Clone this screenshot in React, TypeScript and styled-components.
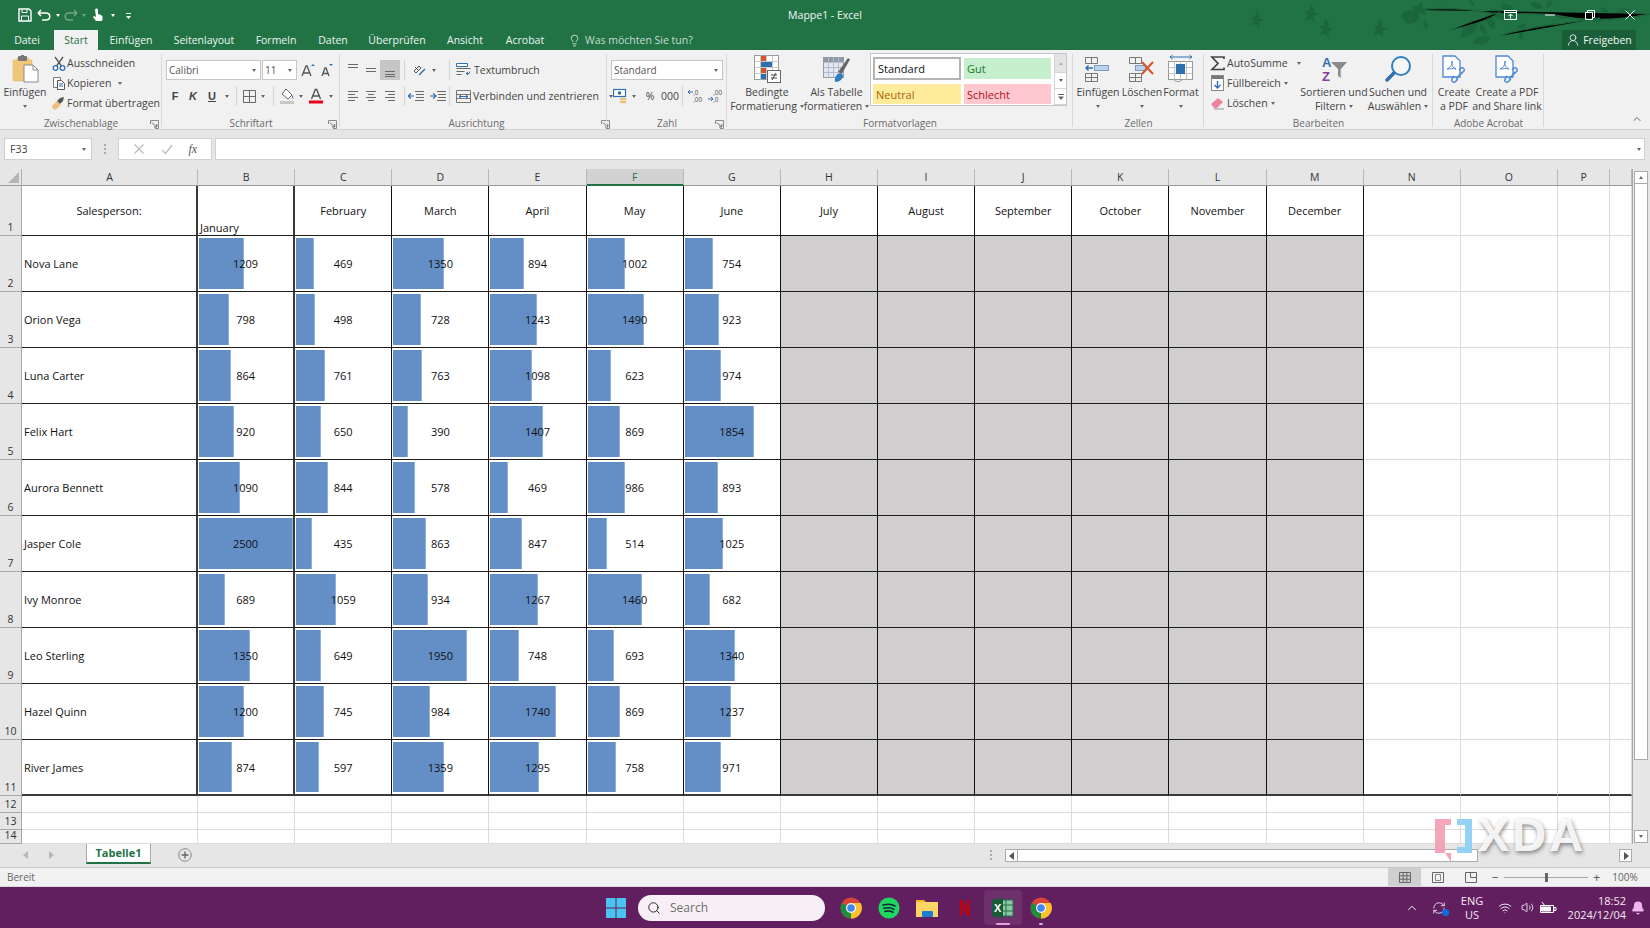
import { ReactNode } from 'react'
import styled, { createGlobalStyle } from 'styled-components'
import { Bell, ChevronUp, Lightbulb, RefreshCw, Search, UserRound, Volume2, Wifi } from 'lucide-react'

const UI_FONT = '"Open Sans", "Noto Sans", sans-serif'

const MONTHS = ['January', 'February', 'March', 'April', 'May', 'June', 'July', 'August', 'September', 'October', 'November', 'December']
const COLS = ['A', 'B', 'C', 'D', 'E', 'F', 'G', 'H', 'I', 'J', 'K', 'L', 'M', 'N', 'O', 'P', '']
const SALES: [string, number[]][] = [
  ['Nova Lane', [1209, 469, 1350, 894, 1002, 754]],
  ['Orion Vega', [798, 498, 728, 1243, 1490, 923]],
  ['Luna Carter', [864, 761, 763, 1098, 623, 974]],
  ['Felix Hart', [920, 650, 390, 1407, 869, 1854]],
  ['Aurora Bennett', [1090, 844, 578, 469, 986, 893]],
  ['Jasper Cole', [2500, 435, 863, 847, 514, 1025]],
  ['Ivy Monroe', [689, 1059, 934, 1267, 1460, 682]],
  ['Leo Sterling', [1350, 649, 1950, 748, 693, 1340]],
  ['Hazel Quinn', [1200, 745, 984, 1740, 869, 1237]],
  ['River James', [874, 597, 1359, 1295, 758, 971]],
]
const MAX_VALUE = 2500
const BAR_SPAN = 94

const GlobalStyle = createGlobalStyle`
  html, body { margin: 0; padding: 0; background: #fff; overflow: hidden; }
  * { box-sizing: border-box; }
  body { font-family: ${UI_FONT}; color: #444; }
`

const Window = styled.div`
  position: relative;
  width: 1650px;
  height: 928px;
  display: flex;
  flex-direction: column;
  overflow: hidden;
`

/* title bar + tabs */
const Header = styled.header`
  position: relative;
  height: 50px;
  background: #217346;
  color: #fff;
`
const Leaves = styled.svg`
  position: absolute;
  left: 0;
  top: 0;
  pointer-events: none;
`
const TitleRow = styled.div`
  position: relative;
  height: 30px;
  display: grid;
  grid-template-columns: 1fr auto 1fr;
  align-items: center;
`
const QuickAccess = styled.div`
  display: flex;
  align-items: center;
  padding-left: 16px;
`
const QuickSlot = styled.span<{ $w: number; $dim?: boolean }>`
  width: ${(p) => p.$w}px;
  display: flex;
  justify-content: center;
  align-items: center;
  opacity: ${(p) => (p.$dim ? 0.35 : 1)};
`
const WindowTitle = styled.div`
  font-size: 10.5px;
  color: #f2f7f4;
  padding-bottom: 1px;
`
const WindowControls = styled.div`
  display: flex;
  justify-content: flex-end;
  padding-right: 0;
`
const WinButton = styled.span`
  width: 40px;
  height: 26px;
  display: flex;
  align-items: center;
  justify-content: center;
`
const TabStrip = styled.nav`
  position: relative;
  height: 20px;
  display: flex;
  align-items: stretch;
`
const Tab = styled.span<{ $w: number; $active?: boolean }>`
  width: ${(p) => p.$w}px;
  display: flex;
  align-items: center;
  justify-content: center;
  font-size: 10.5px;
  color: ${(p) => (p.$active ? '#217346' : '#eef5f1')};
  background: ${(p) => (p.$active ? '#f1f1f1' : 'transparent')};
`
const TellMe = styled.span`
  margin-left: 12px;
  display: flex;
  align-items: center;
  gap: 4px;
  font-size: 10.5px;
  color: #c4dccf;
`
const ShareButton = styled.span`
  margin-left: auto;
  margin-right: 14px;
  width: 74px;
  display: flex;
  align-items: center;
  justify-content: center;
  gap: 3px;
  font-size: 10.5px;
  color: #f4f8f6;
  background: #1a5e39;
`

/* ribbon */
const Ribbon = styled.section`
  height: 80px;
  display: flex;
  background: #f1f1f1;
  border-bottom: 1px solid #d4d4d4;
  font-size: 10.5px;
  color: #444;
`
const Group = styled.div<{ $w: number }>`
  position: relative;
  width: ${(p) => p.$w}px;
  display: grid;
  grid-template-rows: 66px 14px;
  &::after {
    content: '';
    position: absolute;
    right: 0;
    top: 4px;
    bottom: 2px;
    width: 1px;
    background: #d8d8d8;
  }
`
const GroupBody = styled.div<{ $pad?: number }>`
  display: flex;
  padding-top: 3px;
  padding-left: ${(p) => p.$pad ?? 0}px;
`
const GroupLabel = styled.div`
  position: relative;
  display: flex;
  justify-content: center;
  align-items: center;
  font-size: 10px;
  color: #6a6a6a;
`
const Launcher = styled.svg`
  position: absolute;
  right: 3px;
  top: 4px;
`
const LargeButton = styled.div<{ $w: number }>`
  width: ${(p) => p.$w}px;
  display: flex;
  flex-direction: column;
  align-items: center;
  line-height: 14px;
  white-space: nowrap;
`
const LargeIcon = styled.div`
  height: 32px;
  display: flex;
  align-items: center;
  justify-content: center;
`
const LabelLine = styled.div`
  height: 14px;
  display: flex;
  align-items: center;
  gap: 3px;
`
const SmallStack = styled.div<{ $w: number; $ml?: number }>`
  width: ${(p) => p.$w}px;
  margin-left: ${(p) => p.$ml ?? 0}px;
  display: flex;
  flex-direction: column;
`
const SmallRow = styled.div`
  height: 20px;
  display: flex;
  align-items: center;
  white-space: nowrap;
`
const SmallIcon = styled.span<{ $w: number }>`
  width: ${(p) => p.$w}px;
  display: flex;
  justify-content: center;
  align-items: center;
  flex-shrink: 0;
`
const ToolRows = styled.div`
  display: flex;
  flex-direction: column;
  gap: 6px;
  padding-top: 7px;
`
const ToolRow = styled.div`
  height: 20px;
  display: flex;
  align-items: center;
  white-space: nowrap;
`
const Tool = styled.span<{ $w: number; $active?: boolean }>`
  width: ${(p) => p.$w}px;
  height: 20px;
  display: flex;
  align-items: center;
  justify-content: center;
  background: ${(p) => (p.$active ? '#c6c6c6' : 'transparent')};
`
const ToolLetter = styled.span<{ $italic?: boolean; $under?: boolean }>`
  font-family: "Liberation Sans", sans-serif;
  font-weight: 700;
  font-size: 11px;
  color: #444;
  font-style: ${(p) => (p.$italic ? 'italic' : 'normal')};
  text-decoration: ${(p) => (p.$under ? 'underline' : 'none')};
`
const VSep = styled.span<{ $l?: number; $r?: number }>`
  width: 1px;
  height: 20px;
  background: #d4d4d4;
  margin-left: ${(p) => p.$l ?? 0}px;
  margin-right: ${(p) => p.$r ?? 0}px;
  flex-shrink: 0;
`
const Combo = styled.span<{ $w: number; $ml?: number }>`
  width: ${(p) => p.$w}px;
  height: 20px;
  margin-left: ${(p) => p.$ml ?? 0}px;
  background: #fff;
  border: 1px solid #c6c6c6;
  display: flex;
  align-items: center;
  justify-content: space-between;
  padding: 0 4px 0 2px;
  font-size: 10px;
  color: #555;
`
const Caret = styled.span<{ $color?: string; $ml?: number; $block?: boolean }>`
  display: inline-block;
  flex-shrink: 0;
  width: 0;
  height: 0;
  margin-left: ${(p) => p.$ml ?? 0}px;
  border-left: 2.5px solid transparent;
  border-right: 2.5px solid transparent;
  border-top: 3px solid ${(p) => p.$color ?? '#666'};
`
const Gallery = styled.div`
  width: 197px;
  height: 53px;
  display: flex;
  background: #fff;
  border: 1px solid #c6c6c6;
`
const StyleGrid = styled.div`
  flex: 1;
  display: grid;
  grid-template-columns: 88px 87px;
  grid-template-rows: 23px 22px;
  column-gap: 3px;
  row-gap: 3px;
  padding: 3px 0 0 2px;
`
const StyleCell = styled.span<{ $bg: string; $fg: string; $selected?: boolean }>`
  display: flex;
  align-items: center;
  padding-left: 3px;
  font-size: 11px;
  background: ${(p) => p.$bg};
  color: ${(p) => p.$fg};
  border: ${(p) => (p.$selected ? '2px solid #b4b4b4' : '0')};
  margin: ${(p) => (p.$selected ? '0' : '1px 0')};
`
const GalleryScroll = styled.div`
  width: 12px;
  display: flex;
  flex-direction: column;
  border-left: 1px solid #d4d4d4;
`
const GalleryBtn = styled.span<{ $h: number; $bg?: string }>`
  height: ${(p) => p.$h}px;
  display: flex;
  flex-direction: column;
  gap: 1px;
  align-items: center;
  justify-content: center;
  background: ${(p) => p.$bg ?? '#fff'};
  border-bottom: 1px solid #d4d4d4;
`
const CollapseWrap = styled.div`
  flex: 1;
  display: flex;
  justify-content: flex-end;
  align-items: flex-end;
  padding: 0 7px 4px 0;
  color: #666;
`

/* formula bar */
const FormulaBar = styled.div`
  height: 39px;
  display: flex;
  align-items: flex-start;
  padding: 8px 5px 0 4px;
  background: #e6e6e6;
`
const NameBox = styled.div`
  width: 88px;
  height: 22px;
  display: flex;
  align-items: center;
  justify-content: space-between;
  padding: 0 5px;
  background: #fff;
  border: 1px solid #d0d0d0;
  font-size: 10.5px;
  color: #444;
`
const Grip = styled.span`
  width: 26px;
  height: 22px;
  display: flex;
  flex-direction: column;
  align-items: center;
  justify-content: center;
  gap: 2px;
  i {
    width: 2px;
    height: 2px;
    background: #aaa;
  }
`
const FxBox = styled.div`
  width: 94px;
  height: 22px;
  display: flex;
  align-items: center;
  justify-content: space-around;
  padding: 0 6px;
  background: #fff;
  border: 1px solid #d0d0d0;
`
const FxText = styled.span`
  font-family: "Liberation Serif", serif;
  font-style: italic;
  font-size: 12px;
  color: #555;
`
const FormulaInput = styled.div`
  flex: 1;
  height: 22px;
  margin-left: 3px;
  display: flex;
  align-items: center;
  justify-content: flex-end;
  padding-right: 3px;
  background: #fff;
  border: 1px solid #d0d0d0;
`

/* sheet */
const SheetArea = styled.div`
  height: 675px;
  display: flex;
  background: #e6e6e6;
`
const SheetGrid = styled.div`
  width: 1633px;
  display: grid;
  grid-template-columns: 22px 176px repeat(14, 97.15px) 52.3px 1fr;
  grid-template-rows: 17px 50px repeat(10, 56px) 17px 17px 14px;
  background: #fff;
  border-right: 1px solid #a8a8a8;
  border-bottom: 1px solid #a8a8a8;
  color: #111;
  font-size: 11px;
`
const Corner = styled.div`
  background: #e6e6e6;
  border-right: 1px solid #b0b0b0;
  border-bottom: 1px solid #9a9a9a;
  position: relative;
  &::after {
    content: '';
    position: absolute;
    right: 2px;
    bottom: 2px;
    border-style: solid;
    border-width: 0 0 11px 11px;
    border-color: transparent transparent #b5b5b5 transparent;
  }
`
const ColHeader = styled.div<{ $active?: boolean }>`
  display: flex;
  align-items: center;
  justify-content: center;
  font-size: 10.5px;
  color: ${(p) => (p.$active ? '#217346' : '#333')};
  background: ${(p) => (p.$active ? '#d2d2d2' : '#e6e6e6')};
  border-right: 1px solid #b8b8b8;
  border-bottom: ${(p) => (p.$active ? '2px solid #217346' : '1px solid #9a9a9a')};
`
const RowHeader = styled.div`
  display: flex;
  align-items: flex-end;
  justify-content: center;
  font-size: 10.5px;
  line-height: 15px;
  color: #333;
  background: #e6e6e6;
  border-right: 1px solid #a8a8a8;
  border-bottom: 1px solid #a8a8a8;
`
const Cell = styled.div<{ $ruled?: boolean; $heavy?: boolean; $bottom?: boolean; $grey?: boolean; $align?: string; $valign?: string }>`
  position: relative;
  min-width: 0;
  display: flex;
  align-items: ${(p) => p.$valign ?? 'center'};
  justify-content: ${(p) => p.$align ?? 'center'};
  padding: 0 2px;
  background: ${(p) => (p.$grey ? '#d0cece' : '#fff')};
  border-right: ${(p) => (p.$ruled ? (p.$heavy ? '2px solid #3a3a3a' : '1px solid #111') : '1px solid #dcdcdc')};
  border-bottom: ${(p) => (p.$bottom ? '2px solid #3a3a3a' : p.$ruled ? '1px solid #1c1c1c' : '1px solid #dcdcdc')};
`
const DataBar = styled.span`
  position: absolute;
  left: 1px;
  top: 2px;
  bottom: 2px;
  background: #638ec6;
  border-right: 1px solid #8fb0da;
`
const CellValue = styled.span`
  position: relative;
`
const VScroll = styled.div`
  flex: 1;
  display: flex;
  flex-direction: column;
  padding: 2px 2px 1px 1px;
`
const ScrollBtn = styled.span`
  height: 13px;
  display: flex;
  align-items: center;
  justify-content: center;
  background: #fff;
  border: 1px solid #ababab;
`
const ScrollThumb = styled.span`
  flex: 1;
  background: #fff;
  border: 1px solid #ababab;
  border-top: 0;
  margin-bottom: 70px;
`
const ScrollTrack = styled.span`
  flex: 1;
  background: #e6e6e6;
`

/* sheet tabs */
const SheetTabs = styled.div`
  height: 24px;
  display: flex;
  align-items: flex-start;
  background: #e6e6e6;
  border-bottom: 1px solid #c8c8c8;
`
const NavArrows = styled.div`
  width: 86px;
  height: 22px;
  display: flex;
  align-items: center;
  gap: 19px;
  padding-left: 23px;
`
const SheetTab = styled.div`
  width: 65px;
  height: 21px;
  display: flex;
  align-items: center;
  justify-content: center;
  background: #fff;
  border-left: 1px solid #a8a8a8;
  border-right: 1px solid #a8a8a8;
  border-bottom: 2px solid #217346;
  margin-top: -1px;
  font-size: 11px;
  font-weight: 700;
  color: #217346;
`
const AddSheet = styled.span`
  margin-left: 27px;
  height: 22px;
  display: flex;
  align-items: center;
`
const HScrollGrip = styled(Grip)`
  margin-left: auto;
  width: 16px;
  margin-right: 6px;
`
const HScroll = styled.div`
  width: 627px;
  height: 13px;
  margin: 5px 18px 0 0;
  display: flex;
`
const HScrollBtn = styled.span`
  width: 13px;
  display: flex;
  align-items: center;
  justify-content: center;
  background: #fff;
  border: 1px solid #ababab;
  flex-shrink: 0;
`
const HThumb = styled.span`
  width: 460px;
  background: #fff;
  border: 1px solid #ababab;
  border-left: 0;
`

/* status bar */
const StatusBar = styled.footer`
  height: 19px;
  display: flex;
  align-items: stretch;
  background: #f1f1f1;
  border-bottom: 1px solid #d8d8d8;
  font-size: 10px;
  color: #666;
`
const StatusText = styled.span`
  padding-left: 7px;
  display: flex;
  align-items: center;
`
const ViewButtons = styled.div`
  margin-left: auto;
  display: flex;
`
const ViewButton = styled.span<{ $active?: boolean }>`
  width: 33px;
  display: flex;
  align-items: center;
  justify-content: center;
  background: ${(p) => (p.$active ? '#cfcfcf' : 'transparent')};
`
const ZoomBox = styled.div`
  width: 113px;
  display: flex;
  align-items: center;
  gap: 5px;
  padding-left: 5px;
  font-size: 12px;
  color: #555;
`
const ZoomTrack = styled.span`
  position: relative;
  width: 86px;
  height: 1px;
  background: #a8a8a8;
  &::after {
    content: '';
    position: absolute;
    left: 41px;
    top: -4px;
    width: 3px;
    height: 9px;
    background: #666;
  }
`
const ZoomPercent = styled.span`
  width: 50px;
  display: flex;
  align-items: center;
  justify-content: center;
  font-size: 10px;
`

/* taskbar */
const Taskbar = styled.div`
  flex: 1;
  display: flex;
  align-items: center;
  background: #621f5f;
  padding-left: 606px;
  color: #fff;
`
const SearchBox = styled.div`
  width: 187px;
  height: 26px;
  margin-left: 12px;
  margin-right: 7px;
  display: flex;
  align-items: center;
  gap: 9px;
  padding-left: 9px;
  border-radius: 13px;
  background: #f6eff5;
  color: #222;
  span {
    font-size: 12px;
    color: #6d6d6d;
  }
`
const TaskIcon = styled.span<{ $active?: boolean; $w?: number }>`
  position: relative;
  width: ${(p) => p.$w ?? 38}px;
  height: 35px;
  display: flex;
  align-items: center;
  justify-content: center;
  border-radius: 4px;
  background: ${(p) => (p.$active ? 'rgba(255,255,255,0.08)' : 'transparent')};
`
const RunDot = styled.i<{ $wide?: boolean }>`
  position: absolute;
  bottom: 0;
  left: 50%;
  width: ${(p) => (p.$wide ? 14 : 4)}px;
  height: 2.5px;
  transform: translateX(-50%);
  border-radius: 2px;
  background: ${(p) => (p.$wide ? '#e9a0dc' : '#c9b8c9')};
`
const Tray = styled.div`
  margin-left: auto;
  display: flex;
  align-items: center;
  height: 100%;
`
const TraySlot = styled.span<{ $w: number }>`
  position: relative;
  width: ${(p) => p.$w}px;
  display: flex;
  align-items: center;
  justify-content: center;
`
const TrayText = styled.div<{ $w: number; $align: string }>`
  width: ${(p) => p.$w}px;
  font-size: 11px;
  line-height: 14px;
  text-align: ${(p) => p.$align};
  color: #f4eaf3;
`
const SyncDot = styled.i`
  position: absolute;
  right: 5px;
  bottom: -1px;
  width: 7px;
  height: 7px;
  border-radius: 50%;
  background: #0a6de0;
`

/* watermark */
const Watermark = styled.div`
  position: absolute;
  left: 1435px;
  top: 812px;
  display: flex;
  align-items: flex-start;
  gap: 6px;
  pointer-events: none;
`
const WatermarkText = styled.span`
  font-family: "Liberation Sans", sans-serif;
  font-weight: 700;
  font-size: 47px;
  line-height: 46px;
  letter-spacing: 3px;
  color: rgba(255, 255, 255, 0.88);
  text-shadow: 1px 2px 4px rgba(0, 0, 0, 0.45);
`

type IconProps = { children: ReactNode; w?: number; h?: number; vb?: string }
const Ico = ({ children, w = 16, h = 16, vb }: IconProps) => (
  <svg width={w} height={h} viewBox={vb ?? `0 0 ${w} ${h}`} fill="none">
    {children}
  </svg>
)

const Lines = ({ rows, color = '#6a6a6a' }: { rows: [number, number, number][]; color?: string }) => (
  <Ico>
    {rows.map(([a, b, y], i) => (
      <path key={i} d={`M${a} ${y}.5H${b}`} stroke={color} />
    ))}
  </Ico>
)

const DialogLauncher = () => (
  <Launcher width="9" height="9" viewBox="0 0 9 9" fill="none">
    <path d="M.5 4V.5H8.5V8.5H5" stroke="#8a8a8a" />
    <path d="M2 2.5L6.5 7M6.8 4V7H4" stroke="#666" />
  </Launcher>
)

const leaf = (x: number, y: number, rot: number, len: number) => (
  <path
    key={`${x}-${y}`}
    d={`M0 0C${len * 0.3} ${-len * 0.3} ${len * 0.75} ${-len * 0.28} ${len} 0C${len * 0.75} ${len * 0.28} ${len * 0.3} ${len * 0.3} 0 0Z`}
    transform={`translate(${x} ${y}) rotate(${rot})`}
  />
)
const bird = (x: number, y: number, s: number) => (
  <path
    key={`b${x}`}
    d="M0 -9C3 -8 4 -4 3 -1L9 -1L3 2L4 8L0 4L-5 6L-2 1L-5 -3L-1 -3Z"
    transform={`translate(${x} ${y}) scale(${s})`}
  />
)

const LEAVES: [number, number, number, number][] = [
  [1420, 13, 170, 20], [1420, 17, 160, 16], [1402, 13, 10, 17], [1412, 6, 30, 16], [1416, 22, 200, 16], [1418, 12, -70, 10],
  [1425, 20, 80, 10], [1440, 24, 20, 1], [1478, 20, 135, 24], [1480, 24, 60, 13], [1482, 12, 170, 2], [1490, 10, 25, 20],
  [1488, 14, 70, 16], [1470, 0, 60, 8], [1500, 6, 10, 14], [1490, 38, 165, 18], [1520, 30, 80, 10], [1527, 25, 170, 10],
  [1530, 3, 20, 14], [1546, 8, -50, 10], [1555, 14, 15, 14], [1590, 18, 10, 14], [1615, 14, -20, 14], [1600, 8, 30, 10],
]

const LeafArt = () => (
  <Leaves width="1650" height="50" viewBox="0 0 1650 50">
    <g fill="#1b663c">
      {[bird(1256, 20, 1), bird(1310, 14, 1.1), bird(1325, 29, 1.1), bird(1379, 29, 1.1)]}
      {LEAVES.map(([x, y, r, l]) => leaf(x, y, r, l))}
    </g>
    <path
      d="M1418 10C1440 7 1470 9 1490 13C1510 15 1540 12 1560 16C1580 20 1610 22 1650 14M1450 30C1470 26 1490 20 1500 12M1500 36C1520 28 1560 24 1600 18"
      stroke="#1b663c"
      strokeWidth="1.5"
    />
  </Leaves>
)

const PasteIcon = () => (
  <Ico w={28} h={28}>
    <path d="M2 5h4V3h12v2h3v21H2z" fill="#f0c778" stroke="#e2b765" strokeWidth=".5" />
    <rect x="7" y="1" width="9" height="5" rx="1" fill="#777" />
    <rect x="10" y="0" width="3" height="3" fill="#777" />
    <path d="M13 10h9l5 5v12H13z" fill="#fff" stroke="#8a8a8a" />
    <path d="M22 10v5h5" stroke="#8a8a8a" />
  </Ico>
)
const ScissorsIcon = () => (
  <Ico w={14} h={15}>
    <path d="M3 1l6.5 9M11 1L4.5 10" stroke="#555" strokeWidth="1.3" />
    <circle cx="3.5" cy="12" r="2.3" stroke="#2f6fb0" strokeWidth="1.3" />
    <circle cx="10.5" cy="12" r="2.3" stroke="#2f6fb0" strokeWidth="1.3" />
  </Ico>
)
const CopyIcon = () => (
  <Ico w={14} h={14}>
    <path d="M1.5 1.5h7v10h-7z" fill="#fff" stroke="#777" />
    <path d="M5.5 4.5h4l3 3v6h-7z" fill="#fff" stroke="#555" />
    <path d="M7 8h4M7 10h4" stroke="#2f6fb0" />
  </Ico>
)
const PainterIcon = () => (
  <Ico w={15} h={14}>
    <path d="M1 10l5-5 4 4-5 4.5c-2 .5-4-1-4-3.5z" fill="#eec07a" />
    <path d="M6 5l3-3 4-1-1 4-3 3z" fill="#555" />
  </Ico>
)
const BordersIcon = () => (
  <Ico w={13} h={13}>
    <path d="M.5.5h12v12H.5zM6.5.5v12M.5 6.5h12" stroke="#6a6a6a" />
  </Ico>
)
const FillIcon = () => (
  <Ico w={15} h={16}>
    <path d="M6 1l6 6-4 4-6-5z" fill="#fff" stroke="#666" />
    <path d="M12 7c1 1 2 3 1 4-1-1-1-3-1-4z" fill="#2f6fb0" />
    <rect x="0" y="13" width="14" height="3" fill="#c8c8c8" />
  </Ico>
)
const FontColorIcon = () => (
  <Ico w={14} h={16}>
    <path d="M2.5 11L6.3 1.5h1.4L11.5 11M4 8h6" stroke="#555" strokeWidth="1.4" />
    <rect x="0" y="12.5" width="14" height="3" fill="#e8001c" />
  </Ico>
)
const SizeA = ({ up }: { up?: boolean }) => (
  <Ico w={15} h={15}>
    <path d={up ? 'M2 13L6 3h1l4 10M3.5 10h6' : 'M3 13L6 5h1l3 8M4.2 10.5h4.6'} stroke="#555" strokeWidth="1.3" />
    <path d={up ? 'M11 3l2-2 2 2z' : 'M10 1h4l-2 2z'} fill="#2f6fb0" />
  </Ico>
)
const OrientIcon = () => (
  <Ico w={14} h={14}>
    <path d="M2 8l5-5 2 2-5 5zM3 4l3 3" stroke="#555" />
    <path d="M7 12l6-6" stroke="#2f6fb0" strokeWidth="1.5" />
  </Ico>
)
const WrapIcon = () => (
  <Ico w={15} h={15}>
    <path d="M.5.5h11v3H.5z" fill="#fff" stroke="#2f6fb0" />
    <path d="M.5 5.5h14M.5 8.5h8M.5 11.5h5" stroke="#666" />
    <path d="M10 10.5h3l1-2M12 9l-2 1.5 2 1.5" stroke="#2f6fb0" />
  </Ico>
)
const MergeIcon = () => (
  <Ico w={15} h={15}>
    <path d="M.5 1.5h14v12H.5zM.5 5.5h14M.5 9.5h14" stroke="#777" />
    <path d="M3 7.5h9M3 7.5l2-1.5M3 7.5l2 1.5M12 7.5l-2-1.5M12 7.5l-2 1.5" stroke="#2f6fb0" />
  </Ico>
)
const IndentIcon = ({ flip }: { flip?: boolean }) => (
  <Ico w={16} h={12}>
    <path d={flip ? 'M0 6h6M3 3.5L6 6 3 8.5' : 'M6 6H0M3 3.5L0 6l3 2.5'} stroke="#2f6fb0" strokeWidth="1.2" />
    <path d="M7 1.5h9M8 4.5h8M8 7.5h8M7 10.5h9" stroke="#6a6a6a" />
  </Ico>
)
const CurrencyIcon = () => (
  <Ico w={15} h={16}>
    <rect x=".5" y="1.5" width="12" height="7" fill="#fff" stroke="#2f6fb0" strokeWidth="1.2" />
    <circle cx="6.5" cy="5" r="1.8" fill="#2f6fb0" />
    <ellipse cx="10" cy="11" rx="3.5" ry="1.3" fill="#eec07a" />
    <ellipse cx="10" cy="14" rx="3.5" ry="1.3" fill="#eec07a" />
  </Ico>
)
const DecimalText = styled.text`
  font-family: "Liberation Sans", sans-serif;
  font-size: 6.5px;
  fill: #555;
`
const DecimalIcon = ({ more }: { more?: boolean }) => (
  <Ico w={16} h={14}>
    <DecimalText x="5" y="6">{more ? ',0' : ',00'}</DecimalText>
    <DecimalText x="5" y="13">{more ? ',00' : ',0'}</DecimalText>
    <path d={more ? 'M5 3H0M2 1L0 3l2 2' : 'M0 10h5M3 8l2 2-2 2'} stroke="#2f6fb0" />
  </Ico>
)
const CondFormatIcon = () => (
  <Ico w={27} h={28}>
    <rect x=".5" y=".5" width="24" height="24" fill="#fff" stroke="#999" />
    <path d="M6.5.5v24M12.5.5v24M18.5.5v24M.5 6.5h24M.5 12.5h24M.5 18.5h24" stroke="#c9c9c9" />
    <rect x="7" y="1" width="5" height="5" fill="#d0552f" />
    <rect x="7" y="7" width="11" height="5" fill="#2f6fb0" />
    <rect x="7" y="13" width="5" height="5" fill="#d0552f" />
    <rect x="7" y="19" width="5" height="5" fill="#2f6fb0" />
    <rect x="13.5" y="15.5" width="13" height="12" fill="#fff" stroke="#666" />
    <path d="M17 20h6M17 23h6M22 18l-4 7" stroke="#444" />
  </Ico>
)
const TableFormatIcon = () => (
  <Ico w={27} h={28}>
    <rect x=".5" y="2.5" width="20" height="20" fill="#dfe8f3" stroke="#999" />
    <rect x=".5" y="2.5" width="20" height="5" fill="#8f9aa8" />
    <path d="M5.5 2.5v20M10.5 2.5v20M15.5 2.5v20M.5 7.5h20M.5 12.5h20M.5 17.5h20" stroke="#b5bcc6" />
    <path d="M15 17L25 3l2 1.5-8 14z" fill="#666" />
    <path d="M12 27c-1-5 2-9 6-9l2 2c0 4-3 7-8 7z" fill="#2f7fc0" />
  </Ico>
)
const InsertCellIcon = () => (
  <Ico w={26} h={28}>
    <path d="M.5 2.5h12v6H.5zM6.5 2.5v6M.5 18.5h12v8H.5zM.5 22.5h12M6.5 18.5v8" stroke="#777" />
    <rect x="9.5" y="10.5" width="14" height="5" fill="#bcd2e8" stroke="#7a9cc0" />
    <path d="M8 13H1M3.5 10.5L1 13l2.5 2.5" stroke="#2f6fb0" strokeWidth="1.5" />
  </Ico>
)
const DeleteCellIcon = () => (
  <Ico w={26} h={28}>
    <path d="M.5 2.5h12v6H.5zM6.5 2.5v6M.5 18.5h12v8H.5zM.5 22.5h12M6.5 18.5v8" stroke="#777" />
    <rect x="6.5" y="10.5" width="10" height="5" fill="#bcd2e8" stroke="#7a9cc0" />
    <path d="M13 7l11 12M24 7L13 19" stroke="#d8502b" strokeWidth="2" />
  </Ico>
)
const FormatCellIcon = () => (
  <Ico w={26} h={30}>
    <path d="M2 3h22M2 3l2.5-2M2 3l2.5 2M24 3l-2.5-2M24 3l-2.5 2" stroke="#2f6fb0" />
    <rect x=".5" y="7.5" width="24" height="18" fill="#fff" stroke="#999" />
    <path d="M6.5 7.5v18M12.5 7.5v18M18.5 7.5v18M.5 13.5h24M.5 19.5h24" stroke="#c4c4c4" />
    <rect x="8" y="10" width="9" height="10" fill="#2f6fb0" />
    <path d="M6 26c2 2 6 2 8 0" stroke="#999" />
  </Ico>
)
const SigmaIcon = () => (
  <Ico w={16} h={15}>
    <path d="M14 3V1H2l6 6.5L2 13.5h12v-2" stroke="#444" strokeWidth="1.7" />
  </Ico>
)
const FillDownIcon = () => (
  <Ico w={14} h={16}>
    <rect x=".5" y=".5" width="12" height="15" fill="#fff" stroke="#888" />
    <rect x="1" y="1" width="11" height="3" fill="#777" />
    <path d="M6.5 6v7M3.5 10l3 3 3-3" stroke="#2f6fb0" strokeWidth="1.4" />
  </Ico>
)
const EraserIcon = () => (
  <Ico w={15} h={14}>
    <path d="M1 8l7-6 5 4-6 6H4z" fill="#e8859a" />
    <path d="M4 13h10" stroke="#999" />
  </Ico>
)
const SortLetter = styled.text<{ $color: string }>`
  font-family: "Liberation Sans", sans-serif;
  font-size: 13px;
  font-weight: 700;
  fill: ${(p) => p.$color};
`
const SortIcon = () => (
  <Ico w={28} h={28}>
    <SortLetter $color="#2f6fb0" x="2" y="12">A</SortLetter>
    <SortLetter $color="#7b3fa0" x="2" y="26">Z</SortLetter>
    <path d="M11 7h16l-6 7v9l-3-2v-7z" fill="#8a8a8a" />
    <path d="M21 14v8" stroke="#ddd" />
  </Ico>
)
const MagnifierIcon = () => (
  <Ico w={28} h={28}>
    <circle cx="17" cy="11" r="9" stroke="#2f7fc0" strokeWidth="2" fill="#fff" fillOpacity=".4" />
    <path d="M10 18l-7 7" stroke="#2f6fb0" strokeWidth="3.5" strokeLinecap="round" />
  </Ico>
)
const PdfLinkIcon = () => (
  <Ico w={24} h={28}>
    <path d="M1 1h12l5 5v16H1z" fill="#fff" stroke="#4f86d8" strokeWidth="1.3" />
    <path d="M5 14c3-1 6-5 5-8-1 3 1 7 4 8-3-1-6 0-9 0z" stroke="#4f86d8" />
    <path d="M14 24l6-7M17 15l2-2c2-1 4 1 3 3l-3 3M12 21l-2 3c-1 2 1 4 3 3l3-3" stroke="#4f86d8" strokeWidth="1.4" />
  </Ico>
)
const FooterArrow = ({ left, color = '#b8b8b8' }: { left?: boolean; color?: string }) => (
  <Ico w={6} h={8}>
    <path d={left ? 'M5 0v8L0 4z' : 'M1 0v8l5-4z'} fill={color} />
  </Ico>
)
const ChromeIcon = () => (
  <Ico w={22} h={22}>
    <circle cx="11" cy="11" r="10.5" fill="#db4437" />
    <path d="M11 11L20.1 16.3A10.5 10.5 0 0 1 11 21.5 10.5 10.5 0 0 1 1.9 5.8Z" fill="#1e8e3e" />
    <path d="M11 6h9.6A10.5 10.5 0 0 1 11 21.5L11 11z" fill="#fbc02d" />
    <circle cx="11" cy="11" r="5" fill="#fff" />
    <circle cx="11" cy="11" r="3.8" fill="#4285f4" />
  </Ico>
)
const SpotifyIcon = () => (
  <Ico w={22} h={22}>
    <circle cx="11" cy="11" r="10.5" fill="#1ed760" />
    <path d="M5 8c4-1 9-1 12 1M6 11.3c3.5-.8 7.5-.6 10 1M7 14.4c3-.6 6-.4 8 .8" stroke="#123" strokeWidth="1.6" strokeLinecap="round" />
  </Ico>
)
const FolderIcon = () => (
  <Ico w={22} h={20}>
    <path d="M0 2h8l2 2h12v15H0z" fill="#f2b824" />
    <rect x="0" y="4" width="22" height="15" fill="#fbd667" />
    <rect x="6" y="13" width="11" height="6" rx="1" fill="#1a7fd1" />
  </Ico>
)
const NetflixIcon = () => (
  <Ico w={10} h={16}>
    <path d="M0 0h3l7 16H7zM0 0h3v15l-3 1zM7 0h3v16l-3-1z" fill="#b3071a" />
  </Ico>
)
const ExcelMark = styled.text`
  font-family: "Liberation Sans", sans-serif;
  font-weight: 700;
  font-size: 11px;
  fill: #fff;
`
const ExcelIcon = () => (
  <Ico w={22} h={20}>
    <rect x="7" y="2" width="14" height="16" fill="#8cc9a1" stroke="#21734a" />
    <path d="M14 2v16M7 7h14M7 13h14" stroke="#21734a" />
    <path d="M0 2l11-2v20L0 18z" fill="#185c37" />
    <ExcelMark x="2" y="14">X</ExcelMark>
  </Ico>
)
const BatteryIcon = () => (
  <Ico w={18} h={14}>
    <path d="M1.5 4.5h13v7h-13zM15 6.5h2v3h-2z" stroke="#fff" />
    <path d="M3 1l3 4M2.5 6h9v4h-9z" fill="#fff" stroke="#fff" />
  </Ico>
)

const ALIGN_ROWS: Record<string, [number, number, number][]> = {
  top: [[3, 13, 2], [3, 13, 5]],
  middle: [[3, 13, 6], [3, 13, 9]],
  bottom: [[3, 13, 9], [3, 13, 12], [3, 13, 14]],
  left: [[3, 13, 3], [3, 10, 6], [3, 13, 9], [3, 10, 12]],
  center: [[3, 13, 3], [5, 11, 6], [3, 13, 9], [5, 11, 12]],
  right: [[3, 13, 3], [6, 13, 6], [3, 13, 9], [6, 13, 12]],
}

const Large = ({ w, icon, lines, caretOwn }: { w: number; icon: ReactNode; lines: string[]; caretOwn?: boolean }) => (
  <LargeButton $w={w}>
    <LargeIcon>{icon}</LargeIcon>
    {lines.map((l, i) => (
      <LabelLine key={l}>
        {l}
        {caretOwn && i === lines.length - 1 && <Caret />}
      </LabelLine>
    ))}
    {!caretOwn && (
      <LabelLine>
        <Caret />
      </LabelLine>
    )}
  </LargeButton>
)

const Sheet = () => {
  const cells: ReactNode[] = [<Corner key="corner" />]
  COLS.forEach((c) => {
    cells.push(
      <ColHeader key={`h${c}`} $active={c === 'F'}>
        {c}
      </ColHeader>,
    )
  })

  const plain = (row: number, from: number, bottom?: boolean) =>
    COLS.slice(from).map((c) => <Cell key={`${c}${row}`} $bottom={bottom} />)

  cells.push(<RowHeader key="r1">1</RowHeader>)
  cells.push(
    <Cell key="A1" $ruled $heavy>
      Salesperson:
    </Cell>,
  )
  MONTHS.forEach((m, i) => {
    cells.push(
      <Cell key={m} $ruled $heavy={i === 0} $align={i === 0 ? 'flex-start' : 'center'} $valign={i === 0 ? 'flex-end' : 'center'}>
        {m}
      </Cell>,
    )
  })
  cells.push(...plain(1, 13))

  SALES.forEach(([name, values], r) => {
    const row = r + 2
    const last = r === SALES.length - 1
    cells.push(<RowHeader key={`r${row}`}>{row}</RowHeader>)
    cells.push(
      <Cell key={`A${row}`} $ruled $heavy $bottom={last} $align="flex-start">
        {name}
      </Cell>,
    )
    values.forEach((v, i) => {
      cells.push(
        <Cell key={`${i}-${row}`} $ruled $heavy={i === 0} $bottom={last}>
          <DataBar style={{ width: (v / MAX_VALUE) * BAR_SPAN }} />
          <CellValue>{v}</CellValue>
        </Cell>,
      )
    })
    for (let i = 0; i < 6; i += 1) {
      cells.push(<Cell key={`g${i}-${row}`} $ruled $grey $bottom={last} />)
    }
    cells.push(...plain(row, 13, last))
  })

  ;[12, 13, 14].forEach((row) => {
    cells.push(<RowHeader key={`r${row}`}>{row}</RowHeader>)
    cells.push(...plain(row, 0))
  })

  return <SheetGrid>{cells}</SheetGrid>
}

export default function App() {
  return (
    <Window>
      <GlobalStyle />
      <Header>
        <LeafArt />
        <TitleRow>
          <QuickAccess>
            <QuickSlot $w={18}>
              <Ico w={14} h={14}>
                <path d="M1 1h10l2 2v10H1z" stroke="#fff" strokeWidth="1.4" />
                <path d="M4 1.5v3h5v-3M3.5 13V8h7v5" stroke="#fff" />
              </Ico>
            </QuickSlot>
            <QuickSlot $w={20}>
              <Ico w={14} h={12}>
                <path d="M1 4h8c5 0 5 7 0 7H5M1 4l3-3M1 4l3 3" stroke="#fff" strokeWidth="1.5" />
              </Ico>
            </QuickSlot>
            <QuickSlot $w={8}>
              <Caret $color="#fff" />
            </QuickSlot>
            <QuickSlot $w={18} $dim>
              <Ico w={14} h={12}>
                <path d="M13 4H5C0 4 0 11 5 11h4M13 4l-3-3M13 4l-3 3" stroke="#fff" strokeWidth="1.5" />
              </Ico>
            </QuickSlot>
            <QuickSlot $w={8} $dim>
              <Caret $color="#fff" />
            </QuickSlot>
            <QuickSlot $w={20}>
              <Ico w={12} h={15}>
                <path d="M3 1.5c1-1.5 3-1 3 .5v4l3 1c2 1 2 3 1 6H4L1 9l1-1 2 1z" fill="#fff" />
              </Ico>
            </QuickSlot>
            <QuickSlot $w={10}>
              <Caret $color="#fff" />
            </QuickSlot>
            <QuickSlot $w={20}>
              <Ico w={7} h={7}>
                <path d="M1 1.5h5" stroke="#fff" />
                <path d="M1 4h5L3.5 7z" fill="#fff" />
              </Ico>
            </QuickSlot>
          </QuickAccess>
          <WindowTitle>Mappe1 - Excel</WindowTitle>
          <WindowControls>
            <WinButton>
              <Ico w={13} h={10}>
                <path d="M.5.5h12v9H.5zM.5 2.5h12" stroke="#fff" />
                <path d="M6.5 8.5V4M4.5 6l2-2 2 2" stroke="#fff" />
              </Ico>
            </WinButton>
            <WinButton>
              <Ico w={10} h={2}>
                <path d="M0 1h10" stroke="#fff" />
              </Ico>
            </WinButton>
            <WinButton>
              <Ico w={10} h={10}>
                <path d="M.5 2.5h7v7h-7zM2.5 2.5v-2h7v7h-2" stroke="#fff" />
              </Ico>
            </WinButton>
            <WinButton>
              <Ico w={10} h={10}>
                <path d="M.5.5l9 9M9.5.5l-9 9" stroke="#fff" />
              </Ico>
            </WinButton>
          </WindowControls>
        </TitleRow>
        <TabStrip>
          <Tab $w={54}>Datei</Tab>
          <Tab $w={44} $active>
            Start
          </Tab>
          <Tab $w={66}>Einfügen</Tab>
          <Tab $w={80}>Seitenlayout</Tab>
          <Tab $w={64}>Formeln</Tab>
          <Tab $w={50}>Daten</Tab>
          <Tab $w={78}>Überprüfen</Tab>
          <Tab $w={58}>Ansicht</Tab>
          <Tab $w={62}>Acrobat</Tab>
          <TellMe>
            <Lightbulb size={13} strokeWidth={1.3} color="#fff" />
            Was möchten Sie tun?
          </TellMe>
          <ShareButton>
            <UserRound size={14} strokeWidth={1.4} />
            Freigeben
          </ShareButton>
        </TabStrip>
      </Header>

      <Ribbon>
        <Group $w={162}>
          <GroupBody>
            <LargeButton $w={50}>
              <LargeIcon>
                <PasteIcon />
              </LargeIcon>
              <LabelLine>Einfügen</LabelLine>
              <LabelLine>
                <Caret />
              </LabelLine>
            </LargeButton>
            <SmallStack $w={108}>
              <SmallRow>
                <SmallIcon $w={17}>
                  <ScissorsIcon />
                </SmallIcon>
                Ausschneiden
              </SmallRow>
              <SmallRow>
                <SmallIcon $w={17}>
                  <CopyIcon />
                </SmallIcon>
                Kopieren
                <Caret $ml={7} />
              </SmallRow>
              <SmallRow>
                <SmallIcon $w={17}>
                  <PainterIcon />
                </SmallIcon>
                Format übertragen
              </SmallRow>
            </SmallStack>
          </GroupBody>
          <GroupLabel>
            Zwischenablage
            <DialogLauncher />
          </GroupLabel>
        </Group>

        <Group $w={178}>
          <GroupBody $pad={4}>
            <ToolRows>
              <ToolRow>
                <Combo $w={95}>
                  Calibri
                  <Caret />
                </Combo>
                <Combo $w={35} $ml={1}>
                  11
                  <Caret />
                </Combo>
                <Tool $w={20}>
                  <SizeA up />
                </Tool>
                <Tool $w={19}>
                  <SizeA />
                </Tool>
              </ToolRow>
              <ToolRow>
                <Tool $w={18}>
                  <ToolLetter>F</ToolLetter>
                </Tool>
                <Tool $w={18}>
                  <ToolLetter $italic>K</ToolLetter>
                </Tool>
                <Tool $w={20}>
                  <ToolLetter $under>U</ToolLetter>
                </Tool>
                <Tool $w={10}>
                  <Caret />
                </Tool>
                <VSep $l={4} $r={4} />
                <Tool $w={16}>
                  <BordersIcon />
                </Tool>
                <Tool $w={12}>
                  <Caret />
                </Tool>
                <VSep $l={4} $r={4} />
                <Tool $w={18}>
                  <FillIcon />
                </Tool>
                <Tool $w={10}>
                  <Caret />
                </Tool>
                <Tool $w={20}>
                  <FontColorIcon />
                </Tool>
                <Tool $w={10}>
                  <Caret />
                </Tool>
              </ToolRow>
            </ToolRows>
          </GroupBody>
          <GroupLabel>
            Schriftart
            <DialogLauncher />
          </GroupLabel>
        </Group>

        <Group $w={267}>
          <GroupBody $pad={4}>
            <ToolRows>
              <ToolRow>
                <Tool $w={18}>
                  <Lines rows={ALIGN_ROWS.top} />
                </Tool>
                <Tool $w={18}>
                  <Lines rows={ALIGN_ROWS.middle} />
                </Tool>
                <Tool $w={20} $active>
                  <Lines rows={ALIGN_ROWS.bottom} />
                </Tool>
                <VSep $l={4} $r={4} />
                <Tool $w={20}>
                  <OrientIcon />
                </Tool>
                <Tool $w={10}>
                  <Caret />
                </Tool>
                <VSep $l={10} $r={5} />
                <SmallIcon $w={16}>
                  <WrapIcon />
                </SmallIcon>
                <Tool $w={3} />
                Textumbruch
              </ToolRow>
              <ToolRow>
                <Tool $w={18}>
                  <Lines rows={ALIGN_ROWS.left} />
                </Tool>
                <Tool $w={18}>
                  <Lines rows={ALIGN_ROWS.center} />
                </Tool>
                <Tool $w={20}>
                  <Lines rows={ALIGN_ROWS.right} />
                </Tool>
                <VSep $l={4} />
                <Tool $w={22}>
                  <IndentIcon />
                </Tool>
                <Tool $w={22}>
                  <IndentIcon flip />
                </Tool>
                <VSep $r={5} />
                <SmallIcon $w={16}>
                  <MergeIcon />
                </SmallIcon>
                <Tool $w={2} />
                Verbinden und zentrieren
                <Caret $ml={10} />
              </ToolRow>
            </ToolRows>
          </GroupBody>
          <GroupLabel>
            Ausrichtung
            <DialogLauncher />
          </GroupLabel>
        </Group>

        <Group $w={120}>
          <GroupBody $pad={4}>
            <ToolRows>
              <ToolRow>
                <Combo $w={112}>
                  Standard
                  <Caret />
                </Combo>
              </ToolRow>
              <ToolRow>
                <Tool $w={18}>
                  <CurrencyIcon />
                </Tool>
                <Tool $w={10}>
                  <Caret />
                </Tool>
                <Tool $w={22}>%</Tool>
                <Tool $w={18}>000</Tool>
                <VSep $l={3} $r={3} />
                <Tool $w={20}>
                  <DecimalIcon more />
                </Tool>
                <Tool $w={20}>
                  <DecimalIcon />
                </Tool>
              </ToolRow>
            </ToolRows>
          </GroupBody>
          <GroupLabel>
            Zahl
            <DialogLauncher />
          </GroupLabel>
        </Group>

        <Group $w={346}>
          <GroupBody $pad={4}>
            <Large w={72} icon={<CondFormatIcon />} lines={['Bedingte', 'Formatierung']} caretOwn />
            <Large w={67} icon={<TableFormatIcon />} lines={['Als Tabelle', 'formatieren']} caretOwn />
            <Gallery>
              <StyleGrid>
                <StyleCell $bg="#fff" $fg="#111" $selected>
                  Standard
                </StyleCell>
                <StyleCell $bg="#c6efce" $fg="#1d7a1d">
                  Gut
                </StyleCell>
                <StyleCell $bg="#ffeb9c" $fg="#a8660a">
                  Neutral
                </StyleCell>
                <StyleCell $bg="#ffc7ce" $fg="#b0101c">
                  Schlecht
                </StyleCell>
              </StyleGrid>
              <GalleryScroll>
                <GalleryBtn $h={19} $bg="#e4e4e4">
                  <Caret $color="#b0b0b0" style={{ transform: 'rotate(180deg)' }} />
                </GalleryBtn>
                <GalleryBtn $h={16}>
                  <Caret />
                </GalleryBtn>
                <GalleryBtn $h={16}>
                  <Ico w={6} h={6}>
                    <path d="M0 .5h6" stroke="#666" />
                    <path d="M0 2.5h6L3 6z" fill="#666" />
                  </Ico>
                </GalleryBtn>
              </GalleryScroll>
            </Gallery>
          </GroupBody>
          <GroupLabel>Formatvorlagen</GroupLabel>
        </Group>

        <Group $w={131}>
          <GroupBody $pad={1}>
            <Large w={48} icon={<InsertCellIcon />} lines={['Einfügen']} />
            <Large w={40} icon={<DeleteCellIcon />} lines={['Löschen']} />
            <Large w={38} icon={<FormatCellIcon />} lines={['Format']} />
          </GroupBody>
          <GroupLabel>Zellen</GroupLabel>
        </Group>

        <Group $w={229}>
          <GroupBody $pad={4}>
            <SmallStack $w={94}>
              <SmallRow>
                <SmallIcon $w={19}>
                  <SigmaIcon />
                </SmallIcon>
                AutoSumme
                <Caret $ml={9} />
              </SmallRow>
              <SmallRow>
                <SmallIcon $w={19}>
                  <FillDownIcon />
                </SmallIcon>
                Füllbereich
                <Caret $ml={3} />
              </SmallRow>
              <SmallRow>
                <SmallIcon $w={19}>
                  <EraserIcon />
                </SmallIcon>
                Löschen
                <Caret $ml={3} />
              </SmallRow>
            </SmallStack>
            <Large w={64} icon={<SortIcon />} lines={['Sortieren und', 'Filtern']} caretOwn />
            <Large w={64} icon={<MagnifierIcon />} lines={['Suchen und', 'Auswählen']} caretOwn />
          </GroupBody>
          <GroupLabel>Bearbeiten</GroupLabel>
        </Group>

        <Group $w={111}>
          <GroupBody>
            <LargeButton $w={42}>
              <LargeIcon>
                <PdfLinkIcon />
              </LargeIcon>
              <LabelLine>Create</LabelLine>
              <LabelLine>a PDF</LabelLine>
            </LargeButton>
            <LargeButton $w={64}>
              <LargeIcon>
                <PdfLinkIcon />
              </LargeIcon>
              <LabelLine>Create a PDF</LabelLine>
              <LabelLine>and Share link</LabelLine>
            </LargeButton>
          </GroupBody>
          <GroupLabel>Adobe Acrobat</GroupLabel>
        </Group>

        <CollapseWrap>
          <ChevronUp size={12} strokeWidth={2} />
        </CollapseWrap>
      </Ribbon>

      <FormulaBar>
        <NameBox>
          F33
          <Caret />
        </NameBox>
        <Grip>
          <i />
          <i />
          <i />
        </Grip>
        <FxBox>
          <Ico w={12} h={12}>
            <path d="M1.5 1.5l9 9M10.5 1.5l-9 9" stroke="#bcbcbc" strokeWidth="1.3" />
          </Ico>
          <Ico w={12} h={12}>
            <path d="M1 7l3.5 3.5L11 2" stroke="#bcbcbc" strokeWidth="1.3" />
          </Ico>
          <FxText>fx</FxText>
        </FxBox>
        <FormulaInput>
          <Caret />
        </FormulaInput>
      </FormulaBar>

      <SheetArea>
        <Sheet />
        <VScroll>
          <ScrollBtn>
            <Caret $color="#666" style={{ transform: 'rotate(180deg)' }} />
          </ScrollBtn>
          <ScrollThumb />
          <ScrollBtn>
            <Caret $color="#666" />
          </ScrollBtn>
        </VScroll>
      </SheetArea>

      <SheetTabs>
        <NavArrows>
          <FooterArrow left />
          <FooterArrow />
        </NavArrows>
        <SheetTab>Tabelle1</SheetTab>
        <AddSheet>
          <Ico w={14} h={14}>
            <circle cx="7" cy="7" r="6.3" stroke="#888" />
            <path d="M7 3.5v7M3.5 7h7" stroke="#666" strokeWidth="1.4" />
          </Ico>
        </AddSheet>
        <HScrollGrip>
          <i />
          <i />
          <i />
        </HScrollGrip>
        <HScroll>
          <HScrollBtn>
            <FooterArrow left color="#555" />
          </HScrollBtn>
          <HThumb />
          <ScrollTrack />
          <HScrollBtn>
            <FooterArrow color="#555" />
          </HScrollBtn>
        </HScroll>
      </SheetTabs>

      <StatusBar>
        <StatusText>Bereit</StatusText>
        <ViewButtons>
          <ViewButton $active>
            <Ico w={12} h={11}>
              <path d="M.5.5h11v10H.5zM4.2.5v10M7.8.5v10M.5 3.8h11M.5 7.2h11" stroke="#666" />
            </Ico>
          </ViewButton>
          <ViewButton>
            <Ico w={12} h={11}>
              <path d="M.5.5h11v10H.5z" stroke="#666" />
              <path d="M3.5 2.5h5v6h-5z" stroke="#888" />
            </Ico>
          </ViewButton>
          <ViewButton>
            <Ico w={12} h={11}>
              <path d="M.5.5h11v10H.5zM5.5.5v5h6" stroke="#666" />
            </Ico>
          </ViewButton>
        </ViewButtons>
        <ZoomBox>
          −
          <ZoomTrack />
          +
        </ZoomBox>
        <ZoomPercent>100%</ZoomPercent>
      </StatusBar>

      <Taskbar>
        <Ico w={20} h={20}>
          <path d="M0 0h9.5v9.5H0zM10.500 0H20v9.500h-9.500zM0 10.500h9.500V20H0zM10.500 10.500H20V20h-9.500z" fill="#4cc2f1" />
        </Ico>
        <SearchBox>
          <Search size={14} strokeWidth={1.6} />
          <span>Search</span>
        </SearchBox>
        <TaskIcon>
          <ChromeIcon />
        </TaskIcon>
        <TaskIcon>
          <SpotifyIcon />
        </TaskIcon>
        <TaskIcon>
          <FolderIcon />
        </TaskIcon>
        <TaskIcon>
          <NetflixIcon />
        </TaskIcon>
        <TaskIcon $active>
          <ExcelIcon />
          <RunDot $wide />
        </TaskIcon>
        <TaskIcon>
          <ChromeIcon />
          <RunDot />
        </TaskIcon>
        <Tray>
          <TraySlot $w={24}>
            <ChevronUp size={14} strokeWidth={1.6} />
          </TraySlot>
          <TraySlot $w={30}>
            <RefreshCw size={14} strokeWidth={1.3} />
            <SyncDot />
          </TraySlot>
          <TrayText $w={36} $align="center">
            ENG
            <br />
            US
          </TrayText>
          <TraySlot $w={30}>
            <Wifi size={14} strokeWidth={1.5} />
          </TraySlot>
          <TraySlot $w={14}>
            <Volume2 size={13} strokeWidth={1.5} />
          </TraySlot>
          <TraySlot $w={28}>
            <BatteryIcon />
          </TraySlot>
          <TrayText $w={64} $align="right">
            18:52
            <br />
            2024/12/04
          </TrayText>
          <TraySlot $w={24}>
            <Bell size={14} fill="#f2b5ee" color="#f2b5ee" />
          </TraySlot>
        </Tray>
      </Taskbar>

      <Watermark>
        <Ico w={37} h={50}>
          <path d="M16 7H0v34h10l6 9V41h-6V13h6z" fill="#f39bb0" fillOpacity=".9" />
          <path d="M22 7h15v34H22v-6h8V13h-8z" fill="#8ed0f2" fillOpacity=".95" />
        </Ico>
        <WatermarkText>XDA</WatermarkText>
      </Watermark>
    </Window>
  )
}
